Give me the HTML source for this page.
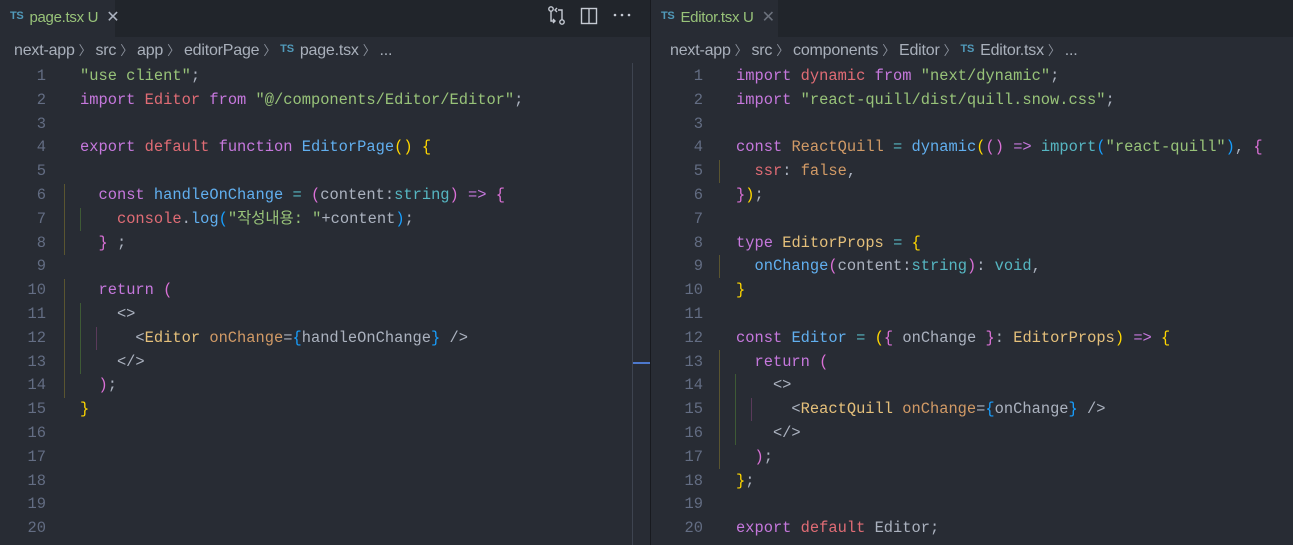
<!DOCTYPE html>
<html><head><meta charset="utf-8"><style>
*{margin:0;padding:0;box-sizing:border-box}
body{width:1293px;height:545px;background:#282c34;overflow:hidden;position:relative;font-family:"Liberation Sans","Noto Sans CJK KR",sans-serif}
.tabbar{position:absolute;top:0;height:37px;background:#21252b}
.tab{position:absolute;top:0;height:37px;background:#282c34;color:#98c379;font-size:15px;line-height:33px;padding-left:10px;white-space:nowrap;letter-spacing:-0.3px}
.ts{color:#519aba;font-size:11px;font-weight:bold;margin-right:6px;vertical-align:3px}
.x{color:#abb2bf;margin-left:8px;font-size:16px}
.bc{position:absolute;top:40px;font-size:16px;color:#a9b0bb;white-space:nowrap;letter-spacing:-0.2px}
.bc .s{color:#8b919c;margin:0 4px;font-size:13px}
.code{position:absolute;top:65px;font-family:"Liberation Mono","Noto Sans CJK KR",monospace;font-size:15.4px;color:#abb2bf}
.l{height:23.8px;line-height:23.8px;white-space:pre}
.ln{position:absolute;top:65px;font-family:"Liberation Mono",monospace;font-size:15.4px;color:#636d83;text-align:right;width:40px}
.g{position:absolute;width:1px}
.k{color:#c678dd}.r{color:#e06c75}.s1{color:#98c379}.f{color:#61afef}.y{color:#e5c07b}.o{color:#d19a66}.c{color:#56b6c2}.p{color:#da70d6}.b{color:#179fff}.gd{color:#ffd700}
</style></head><body>
<div class="tabbar" style="left:0;width:650px"></div>
<div class="tabbar" style="left:651px;width:642px"></div>
<div style="position:absolute;left:650px;top:0;width:1px;height:545px;background:#181a1f"></div>
<div class="tab" style="left:0;width:115px"><span class="ts">TS</span>page.tsx U<span class="x">✕</span></div>
<div class="tab" style="left:651px;width:127px"><span class="ts">TS</span>Editor.tsx U<span class="x" style="color:#6b717c">✕</span></div>
<svg style="position:absolute;left:546px;top:5px" width="22" height="22" viewBox="0 0 22 22" fill="none" stroke="#c5cad3" stroke-width="1.4"><circle cx="5" cy="4" r="2.2"/><circle cx="16" cy="17" r="2.2"/><path d="M5 6.5v9.5h4M16 14.5V5h-4M11 3l-2 2 2 2M7 14l2 2-2 2"/></svg>
<svg style="position:absolute;left:579px;top:6px" width="20" height="20" viewBox="0 0 20 20" fill="none" stroke="#c5cad3" stroke-width="1.4"><rect x="2.5" y="2.5" width="15" height="15"/><path d="M10 2.5v15"/></svg>
<svg style="position:absolute;left:612px;top:13px" width="20" height="4" viewBox="0 0 20 4" fill="#c5cad3"><circle cx="3" cy="2" r="1.3"/><circle cx="10" cy="2" r="1.3"/><circle cx="17" cy="2" r="1.3"/></svg>
<div class="bc" style="left:14px">next-app<span class="s">〉</span>src<span class="s">〉</span>app<span class="s">〉</span>editorPage<span class="s">〉</span><span class="ts">TS</span>page.tsx<span class="s">〉</span>...</div>
<div class="bc" style="left:670px">next-app<span class="s">〉</span>src<span class="s">〉</span>components<span class="s">〉</span>Editor<span class="s">〉</span><span class="ts">TS</span>Editor.tsx<span class="s">〉</span>...</div>
<div style="position:absolute;left:632px;top:63px;width:1px;height:482px;background:#3e4450"></div>
<div style="position:absolute;left:633px;top:362px;width:17px;height:2px;background:#4d78cc"></div>

<div class="ln" style="left:6px"><div class="l">1</div><div class="l">2</div><div class="l">3</div><div class="l">4</div><div class="l">5</div><div class="l">6</div><div class="l">7</div><div class="l">8</div><div class="l">9</div><div class="l">10</div><div class="l">11</div><div class="l">12</div><div class="l">13</div><div class="l">14</div><div class="l">15</div><div class="l">16</div><div class="l">17</div><div class="l">18</div><div class="l">19</div><div class="l">20</div></div>
<div class="g" style="left:64px;top:184px;height:71px;background:#5a5530"></div>
<div class="g" style="left:80px;top:208px;height:23px;background:#3e5a35"></div>
<div class="g" style="left:64px;top:279px;height:119px;background:#5a5530"></div>
<div class="g" style="left:80px;top:303px;height:71px;background:#3e5a35"></div>
<div class="g" style="left:96px;top:327px;height:23px;background:#5a3a5a"></div>
<div class="code" style="left:80px"><div class="l"><span class="s1">"use client"</span>;</div><div class="l"><span class="k">import</span> <span class="r">Editor</span> <span class="k">from</span> <span class="s1">"@/components/Editor/Editor"</span>;</div><div class="l"> </div><div class="l"><span class="k">export</span> <span class="r">default</span> <span class="k">function</span> <span class="f">EditorPage</span><span class="gd">()</span> <span class="gd">{</span></div><div class="l"> </div><div class="l">  <span class="k">const</span> <span class="f">handleOnChange</span> <span class="c">=</span> <span class="p">(</span>content:<span class="c">string</span><span class="p">)</span> <span class="k">=&gt;</span> <span class="p">{</span></div><div class="l">    <span class="r">console</span>.<span class="f">log</span><span class="b">(</span><span class="s1">"작성내용: "</span>+content<span class="b">)</span>;</div><div class="l">  <span class="p">}</span> ;</div><div class="l"> </div><div class="l">  <span class="k">return</span> <span class="p">(</span></div><div class="l">    &lt;&gt;</div><div class="l">      &lt;<span class="y">Editor</span> <span class="o">onChange</span>=<span class="b">{</span>handleOnChange<span class="b">}</span> /&gt;</div><div class="l">    &lt;/&gt;</div><div class="l">  <span class="p">)</span>;</div><div class="l"><span class="gd">}</span></div></div>

<div class="ln" style="left:663px"><div class="l">1</div><div class="l">2</div><div class="l">3</div><div class="l">4</div><div class="l">5</div><div class="l">6</div><div class="l">7</div><div class="l">8</div><div class="l">9</div><div class="l">10</div><div class="l">11</div><div class="l">12</div><div class="l">13</div><div class="l">14</div><div class="l">15</div><div class="l">16</div><div class="l">17</div><div class="l">18</div><div class="l">19</div><div class="l">20</div></div>
<div class="g" style="left:719px;top:160px;height:23px;background:#5a5530"></div>
<div class="g" style="left:719px;top:255px;height:23px;background:#5a5530"></div>
<div class="g" style="left:719px;top:350px;height:119px;background:#5a5530"></div>
<div class="g" style="left:735px;top:374px;height:71px;background:#3e5a35"></div>
<div class="g" style="left:751px;top:398px;height:23px;background:#5a3a5a"></div>
<div class="code" style="left:736px"><div class="l"><span class="k">import</span> <span class="r">dynamic</span> <span class="k">from</span> <span class="s1">"next/dynamic"</span>;</div><div class="l"><span class="k">import</span> <span class="s1">"react-quill/dist/quill.snow.css"</span>;</div><div class="l"> </div><div class="l"><span class="k">const</span> <span class="o">ReactQuill</span> <span class="c">=</span> <span class="f">dynamic</span><span class="gd">(</span><span class="p">()</span> <span class="k">=&gt;</span> <span class="c">import</span><span class="b">(</span><span class="s1">"react-quill"</span><span class="b">)</span>, <span class="p">{</span></div><div class="l">  <span class="r">ssr</span>: <span class="o">false</span>,</div><div class="l"><span class="p">}</span><span class="gd">)</span>;</div><div class="l"> </div><div class="l"><span class="k">type</span> <span class="y">EditorProps</span> <span class="c">=</span> <span class="gd">{</span></div><div class="l">  <span class="f">onChange</span><span class="p">(</span>content:<span class="c">string</span><span class="p">)</span>: <span class="c">void</span>,</div><div class="l"><span class="gd">}</span></div><div class="l"> </div><div class="l"><span class="k">const</span> <span class="f">Editor</span> <span class="c">=</span> <span class="gd">(</span><span class="p">{</span> onChange <span class="p">}</span>: <span class="y">EditorProps</span><span class="gd">)</span> <span class="k">=&gt;</span> <span class="gd">{</span></div><div class="l">  <span class="k">return</span> <span class="p">(</span></div><div class="l">    &lt;&gt;</div><div class="l">      &lt;<span class="y">ReactQuill</span> <span class="o">onChange</span>=<span class="b">{</span>onChange<span class="b">}</span> /&gt;</div><div class="l">    &lt;/&gt;</div><div class="l">  <span class="p">)</span>;</div><div class="l"><span class="gd">}</span>;</div><div class="l"> </div><div class="l"><span class="k">export</span> <span class="r">default</span> Editor;</div></div>
</body></html>
